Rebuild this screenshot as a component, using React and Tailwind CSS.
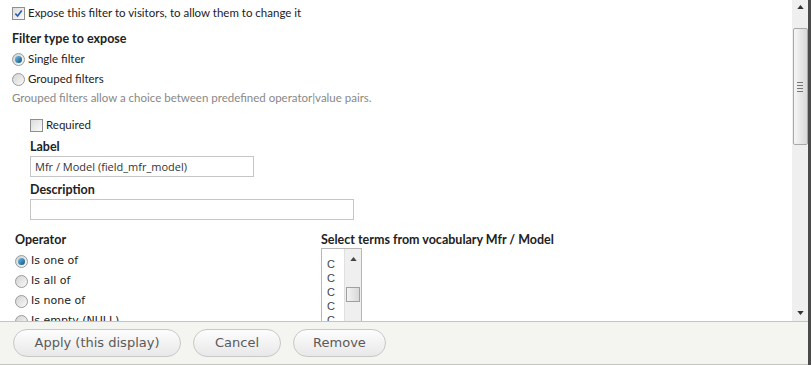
import React from 'react';

const Check = ({ checked }) => (
  <span className="w-[13px] h-[13px] border border-[#8f8f8f] bg-gradient-to-br from-[#dcdcdc] to-[#fbfbfb] flex items-center justify-center shrink-0">
    {checked && (
      <svg viewBox="0 0 10 10" className="w-[9px] h-[9px]">
        <path d="M1.5 5.2 L4 7.8 L8.6 1.6" fill="none" stroke="#2a5fb0" strokeWidth="1.8" />
      </svg>
    )}
  </span>
);

const Radio = ({ checked }) => (
  <span className="w-[13px] h-[13px] rounded-full border border-[#9a9a9a] bg-gradient-to-br from-[#d2d2d2] to-[#fafafa] flex items-center justify-center shrink-0">
    {checked && <span className="w-[7px] h-[7px] rounded-full bg-gradient-to-br from-[#6fc3ef] to-[#11537e]" />}
  </span>
);

const Option = ({ type, checked, label, className = '' }) => (
  <label className={`flex items-center gap-[3px] h-[20px] ${className}`}>
    {type === 'radio' ? <Radio checked={checked} /> : <Check checked={checked} />}
    <span>{label}</span>
  </label>
);

const PillButton = ({ children, w }) => (
  <button className={`${w} h-[28px] rounded-full border border-[#c8c8c8] bg-gradient-to-b from-[#fdfdfd] to-[#e8e8e8] text-[#5a5a5a] text-[13px] font-['DejaVu_Sans',sans-serif]`}>
    {children}
  </button>
);

const App = () => {
  return (
    <div className="w-[811px] h-[365px] flex flex-col bg-white border-r-[3px] border-[#4a4a4a] overflow-hidden font-['Lato',sans-serif] text-[11.5px] text-[#222]">
      <div className="flex h-[321px]">
        <div className="flex-1 overflow-hidden pl-[12px] pt-[3px]">
          <Option type="checkbox" checked label="Expose this filter to visitors, to allow them to change it" />
          <h3 className="font-bold text-[12.5px] mt-[6px] leading-[20px]">Filter type to expose</h3>
          <Option type="radio" checked label="Single filter" />
          <Option type="radio" label="Grouped filters" />
          <p className="text-[11.5px] text-[#888] mt-[1px] leading-[16px]">Grouped filters allow a choice between predefined operator|value pairs.</p>

          <div className="pl-[18px] mt-[9px]">
            <Option type="checkbox" label="Required" />
            <div className="font-bold text-[12.5px] mt-[3px] leading-[18px]">Label</div>
            <input
              readOnly
              value="Mfr / Model (field_mfr_model)"
              className="w-[224px] h-[21px] border border-[#c6c6c6] px-[4px] text-[11px] text-[#333] font-['Open_Sans',sans-serif] outline-none"
            />
            <div className="font-bold text-[12.5px] mt-[4px] leading-[18px]">Description</div>
            <input readOnly className="w-[324px] h-[21px] border border-[#c6c6c6] px-[4px] outline-none" />
          </div>

          <div className="flex mt-[11px]">
            <div className="w-[309px] pl-[3px]">
              <div className="font-bold text-[12.5px] leading-[18px]">Operator</div>
              <div className="font-['DejaVu_Sans',sans-serif] text-[11px] mt-[2px]">
                <Option type="radio" checked label="Is one of" />
                <Option type="radio" label="Is all of" />
                <Option type="radio" label="Is none of" />
                <Option type="radio" label="Is empty (NULL)" />
              </div>
            </div>
            <div>
              <div className="font-bold text-[12.5px] leading-[18px]">Select terms from vocabulary Mfr / Model</div>
              <div className="w-[41px] h-[80px] border border-[#b8b8b8] flex mt-[-1px]">
                <div className="flex-1 pl-[5px] pt-[8px] font-['Liberation_Sans',sans-serif] text-[11px] text-[#444] leading-[14px]">
                  <div>C</div>
                  <div>C</div>
                  <div>C</div>
                  <div>C</div>
                  <div>C</div>
                </div>
                <div className="w-[17px] bg-[#efefef] border-l border-[#e0e0e0] flex flex-col items-center">
                  <svg viewBox="0 0 8 5" className="w-[7px] h-[4px] mt-[8px]"><path d="M0 5 L4 0 L8 5 Z" fill="#444" /></svg>
                  <div className="w-[14px] h-[15px] mt-[26px] border border-[#a0a0a0] bg-gradient-to-r from-[#f4f4f4] to-[#d8d8d8]" />
                </div>
              </div>
            </div>
          </div>
        </div>

        <div className="w-[16px] bg-[#efefef] flex flex-col items-center">
          <svg viewBox="0 0 8 5" className="w-[7px] h-[4px] mt-[5px]"><path d="M0 5 L4 0 L8 5 Z" fill="#333" /></svg>
          <div className="w-[15px] h-[117px] mt-[19px] border border-[#a8a8a8] rounded-[2px] bg-gradient-to-r from-[#f6f6f6] to-[#d9d9d9] flex flex-col items-center justify-center gap-[2px]">
            <span className="w-[6px] h-px bg-[#777]" />
            <span className="w-[6px] h-px bg-[#777]" />
            <span className="w-[6px] h-px bg-[#777]" />
            <span className="w-[6px] h-px bg-[#777]" />
          </div>
          <div className="flex-1" />
          <svg viewBox="0 0 8 5" className="w-[7px] h-[4px] mb-[6px]"><path d="M0 0 L4 5 L8 0 Z" fill="#333" /></svg>
        </div>
      </div>

      <div className="h-[44px] bg-[#f4f4f0] border-t border-b border-[#c4c4c0] flex items-center gap-[12px] pl-[13px]">
        <PillButton w="w-[168px]">Apply (this display)</PillButton>
        <PillButton w="w-[88px]">Cancel</PillButton>
        <PillButton w="w-[93px]">Remove</PillButton>
      </div>
    </div>
  );
};

export default App;
